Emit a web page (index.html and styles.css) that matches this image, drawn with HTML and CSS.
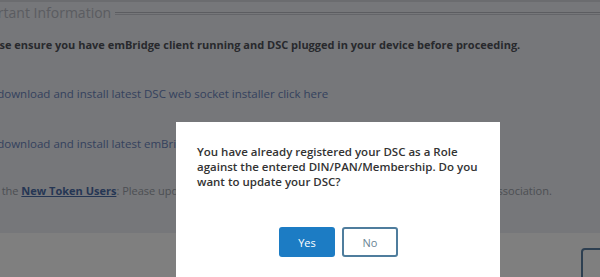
FILE: index.html
```html
<!DOCTYPE html>
<html>
<head>
<meta charset="utf-8">
<link rel="stylesheet" href="styles.css">
</head>
<body>
<div class="page">
  <div class="strip"></div>
  <section class="info">
    <div class="legend-row">
      <span class="legend">Important Information</span>
      <span class="legend-line"></span>
    </div>
    <p class="note strong">Please ensure you have emBridge client running and DSC plugged in your device before proceeding.</p>
    <p class="note link link1">To download and install latest DSC web socket installer click here</p>
    <p class="note link link2">To download and install latest emBridge click here</p>
    <p class="note plain line4">For the <a class="token">New Token Users</a>: Please update your DSC in the portal before registering the Role for this association.</p>
  </section>
  <section class="lower">
    <div class="ghost-btn"></div>
  </section>
</div>

<div class="overlay">
  <div class="modal">
    <p class="modal-text">You have already registered your DSC as a Role against the entered DIN/PAN/Membership. Do you want to update your DSC?</p>
    <div class="actions">
      <button class="btn btn-yes">Yes</button>
      <button class="btn btn-no">No</button>
    </div>
  </div>
</div>
</body>
</html>
```

FILE: styles.css
```css
* { box-sizing: border-box; }

html, body {
  margin: 0;
  width: 600px;
  height: 277px;
  overflow: hidden;
}

body {
  font-family: "Open Sans", "Noto Sans", sans-serif;
  background: #ffffff;
}

.page {
  display: flex;
  flex-direction: column;
  height: 277px;
}

.strip {
  height: 2px;
  flex-shrink: 0;
  background: #d6d8de;
}

.info {
  height: 231px;
  flex-shrink: 0;
  background: #eceef4;
  display: flex;
  flex-direction: column;
  margin-left: -24px;
}

.legend-row {
  display: flex;
  align-items: center;
  height: 20px;
  margin-left: -12px;
}

.legend {
  font-size: 14px;
  color: #b6b9c2;
  padding-right: 4px;
  white-space: nowrap;
}

.legend-line {
  flex: 1;
  height: 3px;
  border-top: 1px solid #b8bbc3;
  border-bottom: 1px solid #c8cbd2;
  margin-top: 2px;
}

.note {
  margin: 0;
  font-size: 11px;
  line-height: 16px;
  white-space: nowrap;
}

.strong {
  margin-top: 15px;
  font-weight: 700;
  color: #50535a;
}

.link {
  color: #6a84bc;
  margin-top: 33px;
  padding-left: 5px;
  font-size: 11.5px;
}

.link2 { margin-top: 34px; }

.plain {
  color: #9a9ea8;
  margin-top: 31px;
  padding-left: 6px;
}

.token {
  color: #4b6ca8;
  font-weight: 700;
  text-decoration: underline;
}

.lower {
  flex: 1;
  min-height: 0;
  overflow: hidden;
  background: #ffffff;
  display: flex;
  justify-content: flex-end;
  padding-top: 15px;
}

.ghost-btn {
  width: 60px;
  height: 40px;
  flex-shrink: 0;
  margin-right: -41px;
  border: 2px solid #5a7ea2;
  border-radius: 4px;
}

.overlay {
  position: fixed;
  inset: 0;
  background: rgba(0, 0, 0, 0.5);
}

.modal {
  position: absolute;
  left: 176px;
  top: 122px;
  width: 324px;
  height: 170px;
  background: #ffffff;
  padding: 22px 20px 0 21px;
}

.modal-text {
  margin: 0;
  font-size: 11.5px;
  line-height: 15px;
  font-weight: 600;
  color: #333333;
}

.actions {
  display: flex;
  justify-content: center;
  gap: 7px;
  margin-top: 38px;
}

.btn {
  width: 56px;
  height: 30px;
  border-radius: 3px;
  font-family: "Open Sans", sans-serif;
  font-size: 11px;
  padding: 0;
}

.btn-yes {
  background: #1c7cc4;
  border: none;
  color: #ffffff;
}

.btn-no {
  background: #ffffff;
  border: 2px solid #4f7d9d;
  color: #6a8494;
}
```
